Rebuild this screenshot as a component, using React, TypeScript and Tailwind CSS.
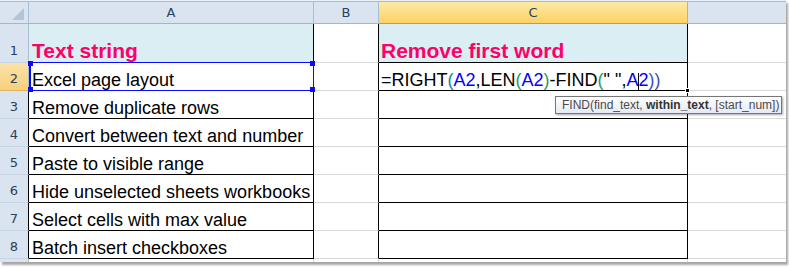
import React from "react";

const rows = [
  "Remove duplicate rows",
  "Convert between text and number",
  "Paste to visible range",
  "Hide unselected sheets workbooks",
  "Select cells with max value",
  "Batch insert checkboxes",
];

const hdr = "bg-[#dae4f0] text-[#27415f] text-[13px]";
const num = "font-['DejaVu_Sans',sans-serif]";

function CornerCell() {
  return (
    <div className={`w-[29px] shrink-0 border-r border-b border-r-[#a9bdd5] border-b-[#9eb6ce] ${hdr} flex items-start`}>
      <svg width="28" height="22" viewBox="0 0 28 22">
        <polygon points="24,6 24,18 12,18" fill="#b4c3d6" />
      </svg>
    </div>
  );
}

function RowHead({ n, dark, active }: { n?: number; dark?: boolean; active?: boolean }) {
  return (
    <div
      className={`w-[29px] shrink-0 border-r border-b flex items-end justify-center pb-[4px] ${num} text-[13px] leading-[15px] ${
        active
          ? "bg-gradient-to-b from-[#fbe3a8] to-[#f7cf7c] text-[#27415f] border-b-[#e0b45c]"
          : `${hdr} border-b-[#c5d3e3]`
      } ${dark ? "border-r-black" : "border-r-[#a9bdd5]"}`}
    >
      {n}
    </div>
  );
}

function Formula() {
  const blue = "text-[#0000ff]";
  return (
    <span className="whitespace-pre">
      =RIGHT<span className="text-[#16878f]">(</span>
      <span className={blue}>A2</span>,LEN<span className="text-[#2a9a5c]">(</span>
      <span className={blue}>A2</span>
      <span className="text-[#2a9a5c]">)</span>-FIND<span className="text-[#2a9a5c]">(</span>{'" ",'}
      <span className={blue}>A</span>
      <span className="inline-block w-px h-[17px] -mr-px bg-black align-[-4px]" />
      <span className={blue}>2</span>
      <span className="text-[#3b4fb8]">)</span>
      <span className="text-[#3b4fb8]">)</span>
    </span>
  );
}

export default function App() {
  const textFont = "font-['Liberation_Sans',Arial,sans-serif]";
  return (
    <div className="w-[789px] h-[267px] bg-white overflow-hidden">
      <div className={`relative w-[786px] h-[262px] overflow-hidden bg-white shadow-[2px_3px_2px_rgba(0,0,0,0.35)] ${textFont}`}>
        {/* column headers */}
        <div className="h-px bg-[#eaf0f8]" />
        <div className="flex h-[23px] border-t border-t-[#a9bcd3]">
          <CornerCell />
          <div className={`w-[285px] shrink-0 border-r border-b border-r-[#a9bdd5] border-b-[#9eb6ce] ${hdr} ${num} flex items-center justify-center`}>A</div>
          <div className={`w-[65px] shrink-0 border-r border-b border-r-[#a9bdd5] border-b-[#9eb6ce] ${hdr} ${num} flex items-center justify-center`}>B</div>
          <div className={`w-[309px] shrink-0 border-r border-b border-r-[#e8a93e] border-b-[#c79a45] bg-gradient-to-b from-[#fee9a4] to-[#fbd266] text-[#27415f] text-[13px] ${num} flex items-center justify-center`}>C</div>
          <div className={`flex-1 border-b border-b-[#9eb6ce] ${hdr}`} />
        </div>

        {/* row 1 */}
        <div className="flex h-[39px]">
          <RowHead n={1} />
          <div className="w-[285px] shrink-0 border-r border-b border-r-black border-b-black bg-[#daeef3] flex items-end pl-[3px] text-[21px] leading-[22px] font-bold text-[#ff0066]">
            Text string
          </div>
          <div className="w-[65px] shrink-0 border-r border-b border-r-black border-b-[#d9d9d9]" />
          <div className="w-[309px] shrink-0 border-r border-b border-black bg-[#daeef3] flex items-end pl-[2px] text-[21px] leading-[22px] font-bold text-[#ff0066]">
            Remove first word
          </div>
          <div className="flex-1 border-b border-b-[#d9d9d9]" />
        </div>

        {/* row 2 */}
        <div className="flex h-[28px]">
          <RowHead n={2} active />
          <div className="w-[285px] shrink-0 border-r border-b border-black flex items-end pl-[3px] text-[18px] leading-[20px] text-black">
            Excel page layout
          </div>
          <div className="w-[65px] shrink-0 border-r border-b border-r-black border-b-[#d9d9d9]" />
          <div className="w-[309px] shrink-0 border-r border-b border-black flex items-end pl-[2px] text-[18px] leading-[20px] text-black">
            <Formula />
          </div>
          <div className="flex-1 border-b border-b-[#d9d9d9]" />
        </div>

        {rows.map((t, i) => (
          <div key={t} className="flex h-[28px]">
            <RowHead n={i + 3} dark />
            <div className="w-[285px] shrink-0 border-r border-b border-black flex items-end pl-[3px] text-[18px] leading-[20px] text-black whitespace-nowrap">
              {t}
            </div>
            <div className="w-[65px] shrink-0 border-r border-b border-r-black border-b-[#d9d9d9]" />
            <div className="w-[309px] shrink-0 border-r border-b border-black" />
            <div className="flex-1 border-b border-b-[#d9d9d9]" />
          </div>
        ))}

        {/* row 9, cut off by the window edge */}
        <div className="flex h-[28px]">
          <RowHead />
          <div className="w-[285px] shrink-0 border-r border-b border-[#d9d9d9]" />
          <div className="w-[65px] shrink-0 border-r border-b border-[#d9d9d9]" />
          <div className="w-[309px] shrink-0 border-r border-b border-[#d9d9d9]" />
          <div className="flex-1 border-b border-b-[#d9d9d9]" />
        </div>

        {/* A2 range finder */}
        <div className="absolute left-[29px] top-[62px] w-[285px] h-[29px] border border-l-2 border-[#0a0aff]" />
        <div className="absolute left-[28px] top-[61px] w-[5px] h-[5px] bg-[#0a0aff]" />
        <div className="absolute left-[310px] top-[61px] w-[5px] h-[5px] bg-[#0a0aff]" />
        <div className="absolute left-[28px] top-[87px] w-[5px] h-[5px] bg-[#0a0aff]" />
        <div className="absolute left-[310px] top-[87px] w-[5px] h-[5px] bg-[#0a0aff]" />

        {/* fill handle */}
        <div className="absolute left-[685px] top-[88px] w-[5px] h-[5px] bg-black border border-white" />

        {/* function tooltip */}
        <div className="absolute left-[555px] top-[96px] w-[227px] h-[18px] border border-[#767676] bg-gradient-to-b from-white to-[#e3eaf5] shadow-[1px_1px_2px_rgba(0,0,0,0.35)] flex items-center pl-[6px] text-[12px] leading-[14px] text-[#4a4a4a] whitespace-pre">
          {"FIND(find_text, "}
          <b className="font-bold text-[#333]">within_text</b>
          {", [start_num])"}
        </div>
      </div>
    </div>
  );
}
